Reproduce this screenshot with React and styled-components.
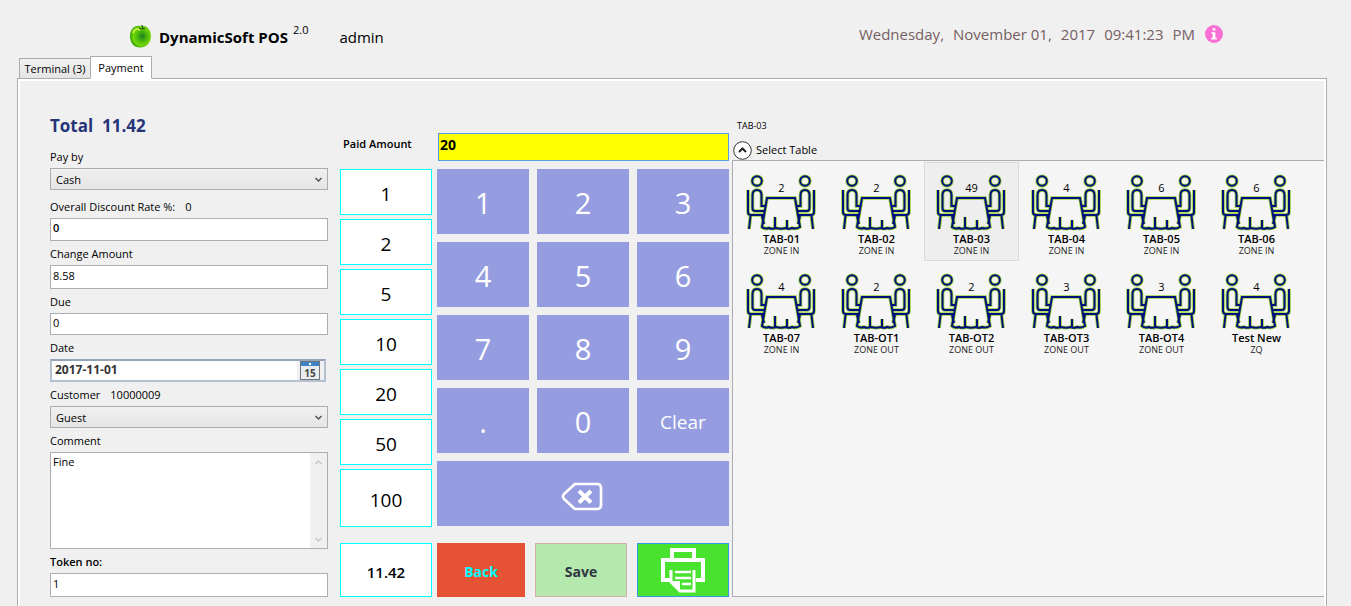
import React from "react";
import styled, { createGlobalStyle } from "styled-components";

const Global = createGlobalStyle`
  *, *::before, *::after { box-sizing: border-box; }
  body {
    margin: 0;
    background: #f0f0f0;
    color: #000;
    font-family: "Open Sans", "Noto Sans", sans-serif;
    font-size: 11px;
    line-height: 16px;
  }
  button, input, select, textarea { font: inherit; color: inherit; border-radius: 0; margin: 0; }
  button { cursor: pointer; padding: 0; }
`;

const Page = styled.div`
  display: flex;
  flex-direction: column;
  min-height: 100vh;
  padding: 0 24px 0 17px;
`;

const Header = styled.header`
  display: flex;
  align-items: flex-start;
  justify-content: space-between;
  height: 56px;
  padding: 20px 104px 0 112px;
`;

const Brand = styled.div`
  display: flex;
  align-items: center;
  height: 32px;
`;

const BrandName = styled.h1`
  margin: 0 5px 0 7px;
  font-size: 15px;
  line-height: 20px;
  padding-top: 1px;
  font-weight: 700;
`;

const Version = styled.span`
  align-self: flex-start;
  font-size: 11px;
  line-height: 20px;
`;

const User = styled.span`
  margin-left: 31px;
  padding-top: 1px;
  font-size: 15px;
  line-height: 20px;
`;

const Clock = styled.div`
  display: flex;
  align-items: center;
  gap: 9px;
  height: 27px;
  color: #755f63;
  font-size: 15px;
  white-space: nowrap;
`;

const InfoButton = styled.button`
  display: flex;
  margin-left: 1px;
  border: 0;
  background: none;
`;

const Tabs = styled.div`
  display: flex;
  align-items: flex-end;
  height: 23px;
  padding-left: 2px;
  margin-bottom: -1px;
  z-index: 1;
`;

const Tab = styled.button`
  height: ${(p) => (p.$active ? 23 : 21)}px;
  width: ${(p) => (p.$active ? 62 : 72)}px;
  margin-right: ${(p) => (p.$active ? 0 : -1)}px;
  border: 1px solid #acacac;
  border-bottom-color: ${(p) => (p.$active ? "#fff" : "#acacac")};
  background: ${(p) => (p.$active ? "#fff" : "linear-gradient(#f0f0f0, #e5e5e5)")};
  white-space: nowrap;
`;

const Panel = styled.main`
  flex: 1;
  display: flex;
  align-items: flex-start;
  padding: 33px 0 8px 29px;
  border: solid #acacac;
  border-width: 1px 1px 0;
  box-shadow: inset 2px 0 #fff, inset -2px 0 #fff, inset 0 2px #fff;
`;

const Form = styled.form`
  flex: none;
  display: flex;
  flex-direction: column;
  width: 281px;
  padding: 0 0 0 3px;
`;

const Total = styled.h2`
  margin: 0;
  padding-bottom: 4px;
  color: #26347a;
  font-size: 17px;
  line-height: 28px;
  font-weight: 700;
  white-space: pre;
`;

const Field = styled.div`
  display: flex;
  flex-direction: column;
  padding-top: ${(p) => (p.$spaced ? 4 : 0)}px;
`;

const LabelRow = styled.div`
  display: flex;
  gap: 10px;
  padding-top: 2px;
  line-height: 22px;
`;

const Label = styled.label`
  font-weight: ${(p) => (p.$strong ? 600 : 400)};
`;

const TextBox = styled.input`
  width: 100%;
  height: ${(p) => p.$h || 24}px;
  padding: 0 2px 4px;
  border: 1px solid #abadb3;
  background: #fff;
  font-weight: ${(p) => (p.$strong ? 600 : 400)};
`;

const SelectWrap = styled.div`
  display: grid;
  align-items: center;
  > * { grid-area: 1 / 1; }
  > svg { justify-self: end; margin-right: 5px; pointer-events: none; }
`;

const Select = styled.select`
  appearance: none;
  width: 100%;
  height: 22px;
  padding: 1px 5px 0;
  border: 1px solid #acacac;
  background: linear-gradient(#f0f0f0, #e5e5e5);
`;

const DateBox = styled.div`
  display: flex;
  align-items: center;
  width: 276px;
  height: 23px;
  padding-right: 4px;
  border: 2px solid #b4c2cf;
  border-top-color: #94a6b5;
  background: #f0f0f0;
`;

const DateInput = styled.input`
  flex: 1;
  min-width: 0;
  height: 19px;
  padding: 0 3px 2px;
  border: 0;
  background: #fff;
  color: #333;
  font-size: 12px;
  font-weight: 700;
`;

const CalendarButton = styled.button`
  display: flex;
  margin-left: 3px;
  border: 0;
  background: none;
`;

const CommentBox = styled.div`
  display: flex;
  height: 97px;
  border: 1px solid #abadb3;
  background: #fff;
`;

const Comment = styled.textarea`
  flex: 1;
  min-width: 0;
  padding: 1px 2px;
  border: 0;
  outline: 0;
  resize: none;
  background: transparent;
`;

const ScrollTrack = styled.div`
  display: flex;
  flex-direction: column;
  align-items: center;
  justify-content: space-between;
  width: 17px;
  padding: 5px 0 4px;
  background: #f0f0f0;
`;

const Entry = styled.section`
  flex: none;
  display: grid;
  grid-template-columns: 92px 292px;
  grid-template-rows: 28px 382px 54px;
  column-gap: 5px;
  padding-top: 21px;
  margin-left: 12px;
`;

const PaidLabel = styled.label`
  padding-left: 3px;
  line-height: 22px;
  font-weight: 600;
  white-space: nowrap;
`;

const PaidInput = styled.input`
  height: 28px;
  margin-left: 1px;
  padding: 0 1px 6px;
  border: 1px solid #569de5;
  outline: 0;
  background: #ff0;
  font-size: 14px;
  font-weight: 700;
`;

const Quick = styled.div`
  display: flex;
  flex-direction: column;
  gap: 4px;
  padding-top: 8px;
`;

const CashButton = styled.button`
  flex: none;
  height: ${(p) => p.$h || 46}px;
  padding-top: 4px;
  border: 1px solid #0ff;
  background: #fff;
  font-size: ${(p) => (p.$exact ? 15 : 19)}px;
  font-weight: ${(p) => (p.$exact ? 600 : 400)};
`;

const Keypad = styled.div`
  display: grid;
  grid-template-columns: repeat(3, 1fr);
  grid-auto-rows: 65px;
  gap: 8px;
  padding-top: 8px;
`;

const Key = styled.button`
  display: flex;
  align-items: center;
  justify-content: center;
  grid-column: ${(p) => (p.$wide ? "1 / -1" : "auto")};
  padding: ${(p) => (p.$wide ? "6px 2px 0 0" : "3px 0 0")};
  border: 0;
  background: #959de0;
  color: #fff;
  font-size: ${(p) => (p.$small ? 19 : 29)}px;
  line-height: 36px;
`;

const Actions = styled.div`
  display: flex;
  justify-content: space-between;
`;

const Action = styled.button`
  display: flex;
  align-items: center;
  justify-content: center;
  width: ${(p) => p.$w || 92}px;
  padding-top: ${(p) => (p.$icon ? 0 : 3)}px;
  border: 1px solid ${(p) => p.$edge};
  background: ${(p) => p.$bg};
  color: ${(p) => p.$ink};
  font-size: 14px;
  font-weight: 700;
`;

const Tables = styled.section`
  flex: 1;
  min-width: 0;
  display: flex;
  flex-direction: column;
  align-self: stretch;
  margin: 0 2px 0 3px;
`;

const CurrentTable = styled.div`
  padding: 6px 0 0 5px;
  font-size: 9px;
  line-height: 16px;
`;

const Expander = styled.button`
  display: flex;
  align-items: center;
  gap: 4px;
  height: 26px;
  padding: 6px 0 0 1px;
  border: 0;
  background: none;
`;

const TableGrid = styled.div`
  display: flex;
  flex-wrap: wrap;
  align-content: flex-start;
  height: 437px;
  padding: 1px;
  border: 1px solid #acacb4;
  border-right: 0;
  background: #f5f5f5;
`;

const TableCard = styled.button`
  display: grid;
  grid-template-rows: 69px 13px 14px;
  justify-items: center;
  align-content: start;
  width: 95px;
  height: 99px;
  border: 1px solid ${(p) => (p.$selected ? "#dadada" : "transparent")};
  background: ${(p) => (p.$selected ? "#eee" : "transparent")};
`;

const Seats = styled.span`
  grid-area: 1 / 1;
  padding-top: 17px;
  z-index: 1;
  font-weight: 500;
`;

const TableArt = styled.svg`
  grid-area: 1 / 1;
  margin: 11px 1px 0 0;
`;

const TableName = styled.span`
  line-height: 13px;
  font-weight: 600;
`;

const Zone = styled.span`
  font-size: 9px;
  line-height: 12px;
  color: #222;
`;

const Chevron = ({ up, color = "#555" }) => (
  <svg width="9" height="9" viewBox="0 0 9 9" fill="none" stroke={color} strokeWidth="1.500">
    <path d={up ? "M1.500 6L4.500 3L7.500 6" : "M1.500 3L4.500 6L7.500 3"} />
  </svg>
);

const Apple = () => (
  <svg width="23" height="24" viewBox="0 0 23 24">
    <defs>
      <radialGradient id="apple" cx="58%" cy="48%" r="60%">
        <stop offset="0" stopColor="#1f7a24" />
        <stop offset=".3" stopColor="#3fae10" />
        <stop offset=".7" stopColor="#74d808" />
        <stop offset="1" stopColor="#2f9a08" />
      </radialGradient>
    </defs>
    <path d="M11 2C16 1 22 4 22 12C22 19 17 23.500 11 23.500C5 23.500 1 19 1 12C1 5 6 1 11 2Z" fill="url(#apple)" />
    <path d="M4 9C5 5 8 4 11 6" stroke="#b9f23c" strokeWidth="2" fill="none" />
    <path d="M10 4Q13 6 16 4M14 5L13 1" stroke="#234a10" strokeWidth="1" fill="none" />
  </svg>
);

const Info = () => (
  <svg width="18" height="18" viewBox="0 0 18 18">
    <circle cx="9" cy="9" r="9" fill="#f96fd3" />
    <path d="M7.600 3.200h2.800v2.400H7.600zM6.400 7.200h4v5.600h1.400v1.600H6.200v-1.600h1.400V8.800H6.400z" fill="#fff" />
  </svg>
);

const Calendar = () => (
  <svg width="20" height="19" viewBox="0 0 20 19">
    <rect x=".5" y=".5" width="19" height="18" fill="#e9edf0" stroke="#6e757c" />
    <rect x="1" y="1" width="18" height="4" fill="#3c82c4" />
    <circle cx="10" cy="3" r="1.200" fill="#fff" />
    <text x="10" y="16" textAnchor="middle" fontSize="10" fontWeight="700" fill="#444">15</text>
  </svg>
);

const Backspace = () => (
  <svg width="42" height="30" viewBox="0 0 42 30" fill="none" stroke="#fff" strokeLinejoin="round">
    <path d="M14 2H36Q40 2 40 6V23Q40 27 36 27H14L3 17Q1 14.500 3 12Z" strokeWidth="2.600" />
    <path d="M18 9L30 20.500M30 9L18 20.500" strokeWidth="4" />
  </svg>
);

const Printer = () => (
  <svg width="46" height="46" viewBox="0 0 46 46" fill="none" stroke="#fff" strokeWidth="4">
    <path d="M12 12V3H34V12" />
    <path d="M10 33H3V13H43V33H36" />
    <path d="M11 23V35L20 44H34V23" strokeWidth="3" />
    <path d="M15 25H31M15 31H31M22 37H31" strokeWidth="2.500" />
    <path d="M11 34H20V44Z" fill="#fff" stroke="none" />
  </svg>
);

const artPaths = (
  <>
    <circle cx="11" cy="7" r="4.800" />
    <circle cx="59" cy="7" r="4.800" />
    <path d="M2 16V38Q2 41 5 41H18M4.500 42L3 55M16 42L18 50" />
    <path d="M68 16V38Q68 41 65 41H52M65.500 42L67 55M54 42L52 50" />
    <path d="M20 32H15.500V21Q15.500 16 11 16Q6.500 16 6.500 21V34Q6.500 37 9 37H19" />
    <path d="M50 32H54.500V21Q54.500 16 59 16Q63.500 16 63.500 21V34Q63.500 37 61 37H51" />
    <path d="M21 24H49L54 53Q50 55.500 46 54Q43 55.500 40 54Q35 55.500 30 54Q26 55.500 23 54Q19 55.500 16 53ZM29 54V43M41 54V46" />
  </>
);

const DiningTable = () => (
  <TableArt width="70" height="57" viewBox="0 0 70 57" fill="none">
    <g stroke="#9bd13a" strokeWidth="3.600">{artPaths}</g>
    <g stroke="#00107c" strokeWidth="2">{artPaths}</g>
  </TableArt>
);

const TABLES = [
  ["TAB-01", 2, "ZONE IN"], ["TAB-02", 2, "ZONE IN"], ["TAB-03", 49, "ZONE IN"],
  ["TAB-04", 4, "ZONE IN"], ["TAB-05", 6, "ZONE IN"], ["TAB-06", 6, "ZONE IN"],
  ["TAB-07", 4, "ZONE IN"], ["TAB-OT1", 2, "ZONE OUT"], ["TAB-OT2", 2, "ZONE OUT"],
  ["TAB-OT3", 3, "ZONE OUT"], ["TAB-OT4", 3, "ZONE OUT"], ["Test New", 4, "ZQ"],
];

const KEYS = ["1", "2", "3", "4", "5", "6", "7", "8", "9", ".", "0", "Clear"];

export default function App() {
  return (
    <Page>
      <Global />
      <Header>
        <Brand>
          <Apple />
          <BrandName>DynamicSoft POS</BrandName>
          <Version>2.0</Version>
          <User>admin</User>
        </Brand>
        <Clock>
          <span>Wednesday,</span>
          <span>November 01,</span>
          <span>2017</span>
          <span>09:41:23</span>
          <span>PM</span>
          <InfoButton aria-label="About"><Info /></InfoButton>
        </Clock>
      </Header>
      <Tabs role="tablist">
        <Tab role="tab" aria-selected="false">Terminal (3)</Tab>
        <Tab role="tab" aria-selected="true" $active>Payment</Tab>
      </Tabs>
      <Panel>
        <Form onSubmit={(e) => e.preventDefault()}>
          <Total>{"Total  11.42"}</Total>
          <Field>
            <LabelRow><Label htmlFor="payby">Pay by</Label></LabelRow>
            <SelectWrap>
              <Select id="payby"><option>Cash</option><option>Card</option></Select>
              <Chevron />
            </SelectWrap>
          </Field>
          <Field $spaced>
            <LabelRow><Label htmlFor="discount">Overall Discount Rate %:</Label><span>0</span></LabelRow>
            <TextBox id="discount" defaultValue="0" $h={23} $strong />
          </Field>
          <Field>
            <LabelRow><Label htmlFor="change">Change Amount</Label></LabelRow>
            <TextBox id="change" defaultValue="8.58" />
          </Field>
          <Field>
            <LabelRow><Label htmlFor="due">Due</Label></LabelRow>
            <TextBox id="due" defaultValue="0" $h={22} />
          </Field>
          <Field>
            <LabelRow><Label htmlFor="date">Date</Label></LabelRow>
            <DateBox>
              <DateInput id="date" defaultValue="2017-11-01" />
              <CalendarButton type="button" aria-label="Pick a date"><Calendar /></CalendarButton>
            </DateBox>
          </Field>
          <Field>
            <LabelRow><Label htmlFor="customer">Customer</Label><span>10000009</span></LabelRow>
            <SelectWrap>
              <Select id="customer"><option>Guest</option></Select>
              <Chevron />
            </SelectWrap>
          </Field>
          <Field>
            <LabelRow><Label htmlFor="comment">Comment</Label></LabelRow>
            <CommentBox>
              <Comment id="comment" defaultValue="Fine" />
              <ScrollTrack>
                <Chevron up color="#c8c8c8" />
                <Chevron color="#c8c8c8" />
              </ScrollTrack>
            </CommentBox>
          </Field>
          <Field>
            <LabelRow><Label htmlFor="token" $strong>Token no:</Label></LabelRow>
            <TextBox id="token" defaultValue="1" />
          </Field>
        </Form>
        <Entry>
          <PaidLabel htmlFor="paid">Paid Amount</PaidLabel>
          <PaidInput id="paid" defaultValue="20" />
          <Quick>
            {["1", "2", "5", "10", "20", "50"].map((v) => <CashButton key={v}>{v}</CashButton>)}
            <CashButton $h={58}>100</CashButton>
          </Quick>
          <Keypad>
            {KEYS.map((k) => <Key key={k} $small={k === "Clear"}>{k}</Key>)}
            <Key $wide aria-label="Backspace"><Backspace /></Key>
          </Keypad>
          <CashButton $h={54} $exact>11.42</CashButton>
          <Actions>
            <Action $w={88} $bg="#e65234" $edge="#e65234" $ink="#0ff">Back</Action>
            <Action $bg="#b4e8ac" $edge="#d2b0a8" $ink="#2f3542">Save</Action>
            <Action $bg="#49e22f" $edge="#3399e6" $icon aria-label="Print"><Printer /></Action>
          </Actions>
        </Entry>
        <Tables>
          <CurrentTable>TAB-03</CurrentTable>
          <Expander aria-expanded="true">
            <svg width="19" height="19" viewBox="0 0 19 19" fill="none">
              <circle cx="9.500" cy="9.500" r="8.800" fill="#fff" stroke="#333" />
              <path d="M6 11L9.500 7.500L13 11" stroke="#222" strokeWidth="2" />
            </svg>
            Select Table
          </Expander>
          <TableGrid>
            {TABLES.map(([name, seats, zone]) => (
              <TableCard key={name} $selected={name === "TAB-03"}>
                <DiningTable />
                <Seats>{seats}</Seats>
                <TableName>{name}</TableName>
                <Zone>{zone}</Zone>
              </TableCard>
            ))}
          </TableGrid>
        </Tables>
      </Panel>
    </Page>
  );
}
